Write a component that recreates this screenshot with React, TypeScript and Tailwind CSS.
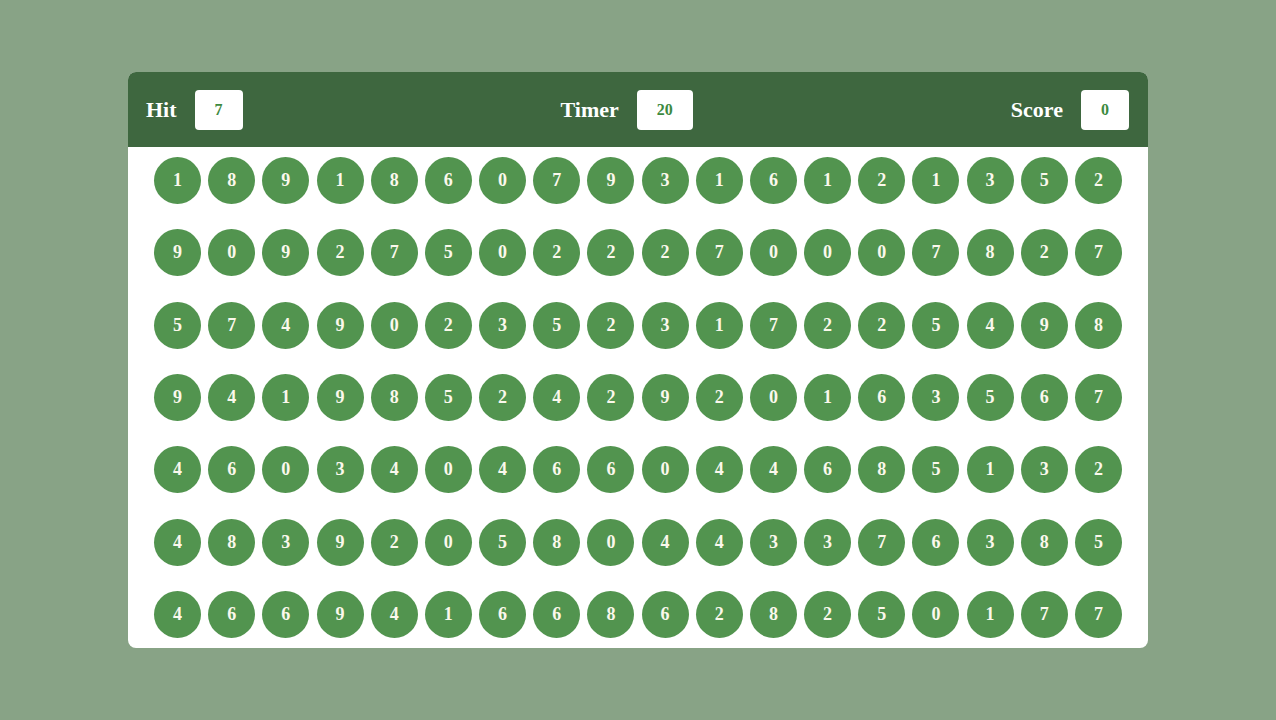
const rows = [
  "189186079316121352",
  "909275022270007827",
  "574902352317225498",
  "941985242920163567",
  "460340466044685132",
  "483920580443376385",
  "466941668628250177",
];

const StatBox = ({ label, value }: { label: string; value: string }) => {
  return (
    <div className="flex items-center gap-[18px]">
      <span className="text-[22px] font-bold text-white">{label}</span>
      <div className="bg-white rounded-[4px] h-[40px] px-5 flex items-center text-[16px] font-bold text-[#3d8a3f]">
        {value}
      </div>
    </div>
  );
};

const App = () => {
  return (
    <div
      className="min-h-screen w-full bg-[#88a386] flex items-center justify-center"
      style={{ fontFamily: '"Liberation Serif", "Times New Roman", serif' }}
    >
      <div className="w-[1020px] h-[576px] bg-white rounded-lg overflow-hidden flex flex-col">
        <div className="h-[75px] bg-[#3e673f] flex items-center justify-between pl-[18px] pr-[19px]">
          <StatBox label="Hit" value="7" />
          <StatBox label="Timer" value="20" />
          <StatBox label="Score" value="0" />
        </div>
        <div className="flex-1 flex flex-col justify-between px-[26px] py-[10px]">
          {rows.map((row, i) => (
            <div key={i} className="flex justify-between">
              {row.split("").map((d, j) => (
                <div
                  key={j}
                  className="w-[47px] h-[47px] rounded-full bg-[#52944f] flex items-center justify-center text-[18px] font-bold text-[#fbf8ec]"
                >
                  {d}
                </div>
              ))}
            </div>
          ))}
        </div>
      </div>
    </div>
  );
};

export default App;
